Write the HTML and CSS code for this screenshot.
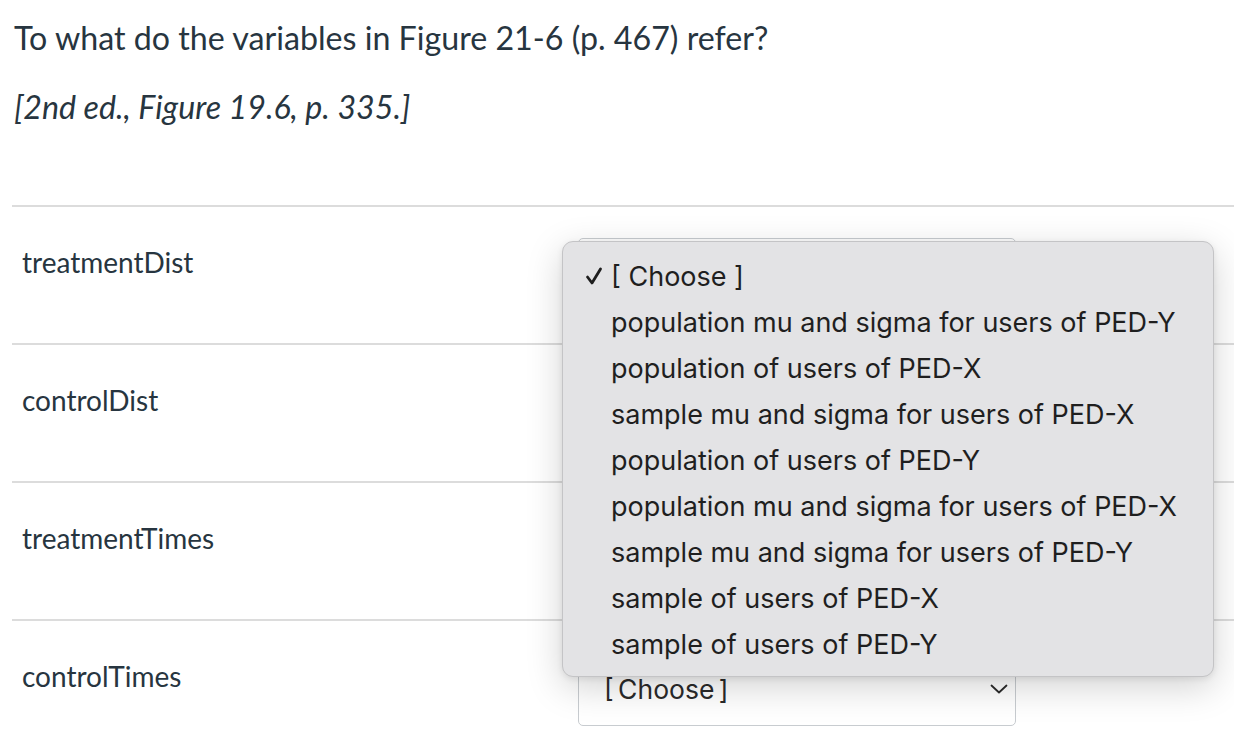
FILE: index.html
```html
<!DOCTYPE html>
<html lang="en">
<head>
<meta charset="utf-8">
<title>Quiz question</title>
<link rel="stylesheet" href="styles.css">
</head>
<body>
<div class="question">
  <div class="question-text">
    <p class="prompt">To what do the variables in Figure 21-6 (p. 467) refer?</p>
    <p class="note"><em>[2nd ed., Figure 19.6, p. 335.]</em></p>
  </div>
  <div class="answers">
    <div class="row">
      <div class="label">treatmentDist</div>
      <div class="select-wrap">
        <div class="select"><span class="select-text">[ Choose ]</span><svg class="chevron" width="18" height="10" viewBox="0 0 18 10"><polyline points="1.5,1.5 9,8.5 16.5,1.5" fill="none" stroke="#2b2b2b" stroke-width="1.8" stroke-linecap="round" stroke-linejoin="round"/></svg></div>
        <div class="menu">
          <div class="item selected"><svg class="check" width="18" height="20" viewBox="0 0 18 20"><polyline points="2.5,11 7,17 15.5,3" fill="none" stroke="#1e1e1e" stroke-width="2.8" stroke-linecap="round" stroke-linejoin="round"/></svg><span>[ Choose ]</span></div>
          <div class="item"><span>population mu and sigma for users of PED-Y</span></div>
          <div class="item"><span>population of users of PED-X</span></div>
          <div class="item"><span>sample mu and sigma for users of PED-X</span></div>
          <div class="item"><span>population of users of PED-Y</span></div>
          <div class="item"><span>population mu and sigma for users of PED-X</span></div>
          <div class="item"><span>sample mu and sigma for users of PED-Y</span></div>
          <div class="item"><span>sample of users of PED-X</span></div>
          <div class="item"><span>sample of users of PED-Y</span></div>
        </div>
      </div>
    </div>
    <div class="row">
      <div class="label">controlDist</div>
      <div class="select-wrap">
        <div class="select"><span class="select-text">[ Choose ]</span><svg class="chevron" width="18" height="10" viewBox="0 0 18 10"><polyline points="1.5,1.5 9,8.5 16.5,1.5" fill="none" stroke="#2b2b2b" stroke-width="1.8" stroke-linecap="round" stroke-linejoin="round"/></svg></div>
      </div>
    </div>
    <div class="row">
      <div class="label">treatmentTimes</div>
      <div class="select-wrap">
        <div class="select"><span class="select-text">[ Choose ]</span><svg class="chevron" width="18" height="10" viewBox="0 0 18 10"><polyline points="1.5,1.5 9,8.5 16.5,1.5" fill="none" stroke="#2b2b2b" stroke-width="1.8" stroke-linecap="round" stroke-linejoin="round"/></svg></div>
      </div>
    </div>
    <div class="row">
      <div class="label">controlTimes</div>
      <div class="select-wrap">
        <div class="select"><span class="select-text">[ Choose ]</span><svg class="chevron" width="18" height="10" viewBox="0 0 18 10"><polyline points="1.5,1.5 9,8.5 16.5,1.5" fill="none" stroke="#2b2b2b" stroke-width="1.8" stroke-linecap="round" stroke-linejoin="round"/></svg></div>
      </div>
    </div>
  </div>
</div>
</body>
</html>
```

FILE: styles.css
```css
html, body {
  margin: 0;
  padding: 0;
  background: #ffffff;
}

body {
  font-family: Lato, "Noto Sans", sans-serif;
  color: #273540;
  width: 1234px;
  height: 742px;
  overflow: hidden;
}

.question {
  padding-left: 12px;
}

.question-text {
  padding-left: 2px;
}

.prompt,
.note {
  font-size: 32.2px;
  line-height: 48px;
  margin: 0;
}

.prompt {
  padding-top: 14px;
}

.note {
  margin-top: 21px;
}

.answers {
  margin-top: 74px;
  border-top: 2px solid #dcdcdc;
}

.row {
  display: flex;
  align-items: flex-start;
  height: 136px;
  border-bottom: 2px solid #dcdcdc;
}

.label {
  flex: 0 0 556px;
  padding-left: 10px;
  padding-top: 35px;
  font-size: 28px;
  line-height: 40px;
}

.select-wrap {
  position: relative;
  margin-top: 31px;
}

.select {
  box-sizing: border-box;
  width: 438px;
  height: 74px;
  border: 1.5px solid #c8ccd0;
  border-radius: 5px;
  background: #ffffff;
  display: flex;
  align-items: center;
  justify-content: space-between;
  padding: 0 7px 0 25px;
}

.select-text {
  font-family: Inter, Roboto, sans-serif;
  font-size: 26.5px;
  word-spacing: -3px;
  color: #2a2a2a;
}

.chevron {
  display: block;
}

.menu {
  position: absolute;
  left: -16px;
  top: 3px;
  width: 652px;
  box-sizing: border-box;
  padding: 11px 0 9px;
  background: #e3e3e5;
  border: 1px solid #c4c4c6;
  border-radius: 11px;
  box-shadow: 0 10px 36px rgba(0, 0, 0, 0.18), 0 2px 6px rgba(0, 0, 0, 0.08);
  z-index: 10;
}

.item {
  display: flex;
  align-items: center;
  height: 46px;
  padding-left: 48px;
  font-family: Inter, Roboto, sans-serif;
  font-size: 27px;
  color: #1f1f1f;
  position: relative;
}

.check {
  position: absolute;
  left: 22px;
  top: 13px;
}
```
